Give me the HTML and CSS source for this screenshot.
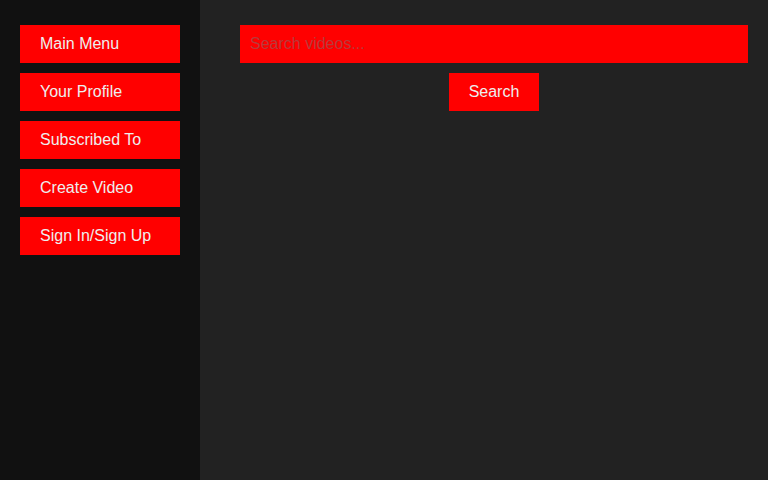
FILE: index.html
```html
<!DOCTYPE html>
<html>
<head>
<meta charset="utf-8">
<link rel="stylesheet" href="styles.css">
</head>
<body>
<div class="app">
  <nav class="sidebar">
    <a class="nav-btn">Main Menu</a>
    <a class="nav-btn">Your Profile</a>
    <a class="nav-btn">Subscribed To</a>
    <a class="nav-btn">Create Video</a>
    <a class="nav-btn">Sign In/Sign Up</a>
  </nav>
  <main class="main">
    <input class="search-input" type="text" placeholder="Search videos...">
    <button class="search-btn">Search</button>
  </main>
</div>
</body>
</html>
```
FILE: styles.css
```css
html, body {
  margin: 0;
  height: 100%;
  font-family: "Liberation Sans", Arial, sans-serif;
  font-size: 16px;
}
.app {
  display: flex;
  height: 100%;
}
.sidebar {
  width: 200px;
  box-sizing: border-box;
  background: #111111;
  padding: 25px 20px;
  display: flex;
  flex-direction: column;
  gap: 10px;
}
.nav-btn {
  display: flex;
  align-items: center;
  height: 38px;
  box-sizing: border-box;
  padding: 0 20px;
  background: #ff0000;
  color: #eeeeee;
  cursor: pointer;
}
.main {
  flex: 1;
  background: #222222;
  padding: 25px 20px 0 40px;
  display: flex;
  flex-direction: column;
  align-items: center;
  gap: 10px;
}
.search-input {
  width: 100%;
  height: 38px;
  box-sizing: border-box;
  border: none;
  outline: none;
  background: #ff0000;
  color: #eeeeee;
  padding: 0 10px;
  font-family: inherit;
  font-size: 16px;
}
.search-input::placeholder {
  color: #b83a3a;
  opacity: 1;
}
.search-btn {
  height: 38px;
  padding: 0 20px;
  border: none;
  background: #ff0000;
  color: #eeeeee;
  font-family: inherit;
  font-size: 16px;
}
```
